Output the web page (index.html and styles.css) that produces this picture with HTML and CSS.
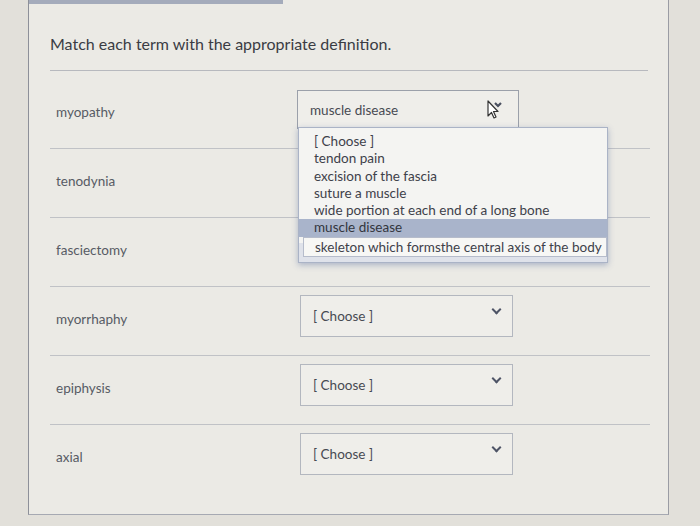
FILE: index.html
```html
<!DOCTYPE html>
<html lang="en">
<head>
<meta charset="utf-8">
<title>Match each term</title>
<link rel="stylesheet" href="styles.css">
</head>
<body>
<div class="page">
  <div class="card">
    <div class="card-top"></div>
    <h1 class="title">Match each term with the appropriate definition.</h1>
    <div class="divider"></div>
    <div class="rows">
      <div class="row first">
        <div class="term">myopathy</div>
        <div class="select open">
          <span class="value">muscle disease</span>
          <svg class="cursor" width="16" height="20" viewBox="0 0 16 20"><path d="M2 1 L2 16 L5.5 12.5 L8 18 L10 17 L7.5 11.5 L12 11.5 Z" fill="#fff" stroke="#333" stroke-width="1.2" stroke-linejoin="round"/><path d="M9 3 L12 6 L15 3" fill="none" stroke="#4a5060" stroke-width="2.2"/></svg>
        </div>
      </div>
      <div class="row">
        <div class="term">tenodynia</div>
      </div>
      <div class="row">
        <div class="term">fasciectomy</div>
      </div>
      <div class="row">
        <div class="term">myorrhaphy</div>
        <div class="select"><span class="value">[ Choose ]</span><span class="chev"></span></div>
      </div>
      <div class="row">
        <div class="term">epiphysis</div>
        <div class="select"><span class="value">[ Choose ]</span><span class="chev"></span></div>
      </div>
      <div class="row last">
        <div class="term">axial</div>
        <div class="select"><span class="value">[ Choose ]</span><span class="chev"></span></div>
      </div>
    </div>
  </div>
  <div class="dropdown">
    <ul class="options">
      <li>[ Choose ]</li>
      <li>tendon pain</li>
      <li>excision of the fascia</li>
      <li>suture a muscle</li>
      <li>wide portion at each end of a long bone</li>
      <li class="hl">muscle disease</li>
      <li class="boxed">skeleton which formsthe central axis of the body</li>
    </ul>
  </div>
</div>
</body>
</html>
```

FILE: styles.css
```css
html, body {
  margin: 0;
  padding: 0;
}
body {
  background: #e2e0da;
  font-family: Lato, "Open Sans", sans-serif;
  width: 700px;
  height: 526px;
  overflow: hidden;
}
.page {
  position: relative;
  padding-left: 28px;
  height: 526px;
}
.card {
  width: 639px;
  height: 514px;
  background: #ebeae5;
  border-left: 1px solid #8d9099;
  border-right: 1px solid #9a9ca4;
  border-bottom: 1px solid #a6a9b2;
}
.card-top {
  width: 254px;
  height: 4px;
  background: #a4abbb;
}
.title {
  margin: 30px 0 0 21px;
  font-size: 16px;
  font-weight: 400;
  color: #3a3c43;
  line-height: 20px;
}
.divider {
  margin: 16px 20px 0 21px;
  border-top: 1px solid #b7b9be;
}
.rows {
  margin: 8px 18px 0 21px;
}
.row {
  height: 68px;
  display: flex;
  align-items: center;
  border-bottom: 1px solid #c0c2c6;
}
.row.first {
  height: 69px;
}
.row.last {
  border-bottom: none;
}
.term {
  width: 250px;
  padding-left: 6px;
  box-sizing: border-box;
  font-size: 13.5px;
  color: #575b64;
  margin-top: -4px;
}
.select {
  position: relative;
  width: 213px;
  height: 42px;
  box-sizing: border-box;
  border: 1px solid #b3b7bf;
  background: #efeeea;
  display: flex;
  align-items: center;
  padding-left: 12px;
  font-size: 13.5px;
  color: #474a52;
  margin-top: -10px;
}
.select.open {
  width: 222px;
  height: 39px;
  margin-top: -8px;
  margin-left: -3px;
  border-color: #9ba0aa;
}
.cursor {
  position: absolute;
  right: 16px;
  top: 9px;
}
.chev {
  position: absolute;
  right: 12px;
  top: 10px;
  width: 5px;
  height: 5px;
  border-right: 2px solid #4e5466;
  border-bottom: 2px solid #4e5466;
  transform: rotate(45deg);
}
.dropdown {
  position: absolute;
  left: 298px;
  top: 127px;
  width: 310px;
  height: 136px;
  box-sizing: border-box;
  background: #dfe2ea;
  border: 1px solid #aab3c6;
  box-shadow: 0 2px 6px rgba(90, 110, 160, 0.45);
}
.options {
  list-style: none;
  margin: 0;
  padding: 5px 0 0 0;
  background: #f4f4f2;
  height: 110px;
}
.options li {
  height: 17.3px;
  line-height: 17px;
  padding-left: 15px;
  font-size: 13.5px;
  color: #3e414a;
  white-space: nowrap;
}
.options li.hl {
  background: #a9b4cb;
  color: #33363e;
}
.options li.boxed {
  background: #f7f7f5;
  margin: 0 0 0 4px;
  padding-left: 11px;
  border: 1px solid #b6bccb;
  height: 18px;
  line-height: 18px;
}
```
